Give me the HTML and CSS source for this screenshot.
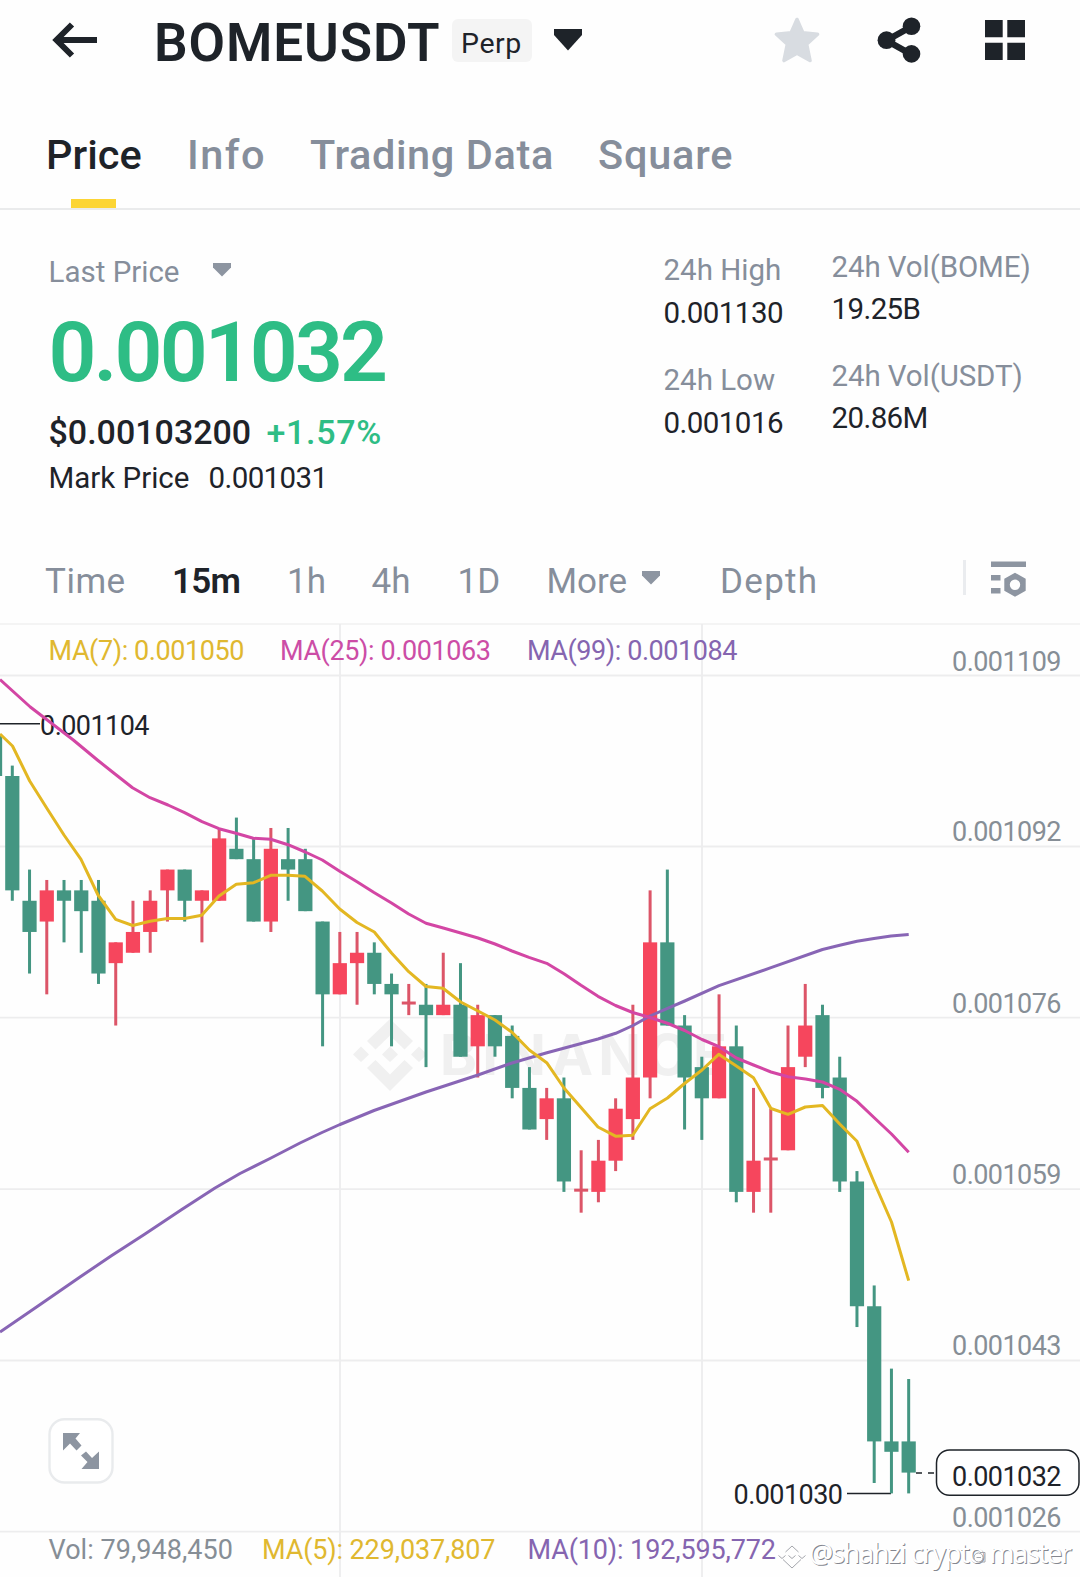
FILE: index.html
```html
<!DOCTYPE html>
<html lang="en">
<head>
<meta charset="utf-8">
<title>BOMEUSDT Perp</title>
<link rel="stylesheet" href="styles.css">
</head>
<body>
<header class="topbar">
  <svg class="back" width="46" height="36" viewBox="0 0 46 36"><path d="M20 2.5 4.5 18 20 33.5M4.5 18H45" fill="none" stroke="#1e2329" stroke-width="6"/></svg>
  <h1 class="pair">BOMEUSDT</h1>
  <span class="badge">Perp</span>
  <svg class="pair-caret" width="28" height="22" viewBox="0 0 28 22"><path d="M0 0H28V6L14 21.5 0 6Z" fill="#1e2329"/></svg>
  <div class="actions">
    <svg width="46" height="47" viewBox="0 0 46 47"><path d="M23 2.5 28.8 15.7 43.5 17.2 32.6 27.2 36 43.5 23 36.3 10 43.5 13.4 27.2 2.5 17.2 17.2 15.7Z" fill="#d8dce1" stroke="#d8dce1" stroke-width="3.6" stroke-linejoin="round"/></svg>
    <svg width="44" height="47" viewBox="0 0 44 47"><path d="M34.5 9.5 9.5 23.5 34.5 37.5" fill="none" stroke="#1e2329" stroke-width="6.5"/><g fill="#1e2329"><circle cx="34.5" cy="9.3" r="8.8"/><circle cx="9.5" cy="23.2" r="8.9"/><circle cx="34.5" cy="36.9" r="8.8"/></g></svg>
    <svg width="40" height="40" viewBox="0 0 40 40"><path d="M0 0h17.7v17.2H0zM22.3 0H40v17.2H22.3zM0 22.7h17.7V40H0zM22.3 22.7H40V40H22.3z" fill="#1e2329"/></svg>
  </div>
</header>

<nav class="tabs">
  <a class="tab tab-price active">Price</a>
  <a class="tab tab-info">Info</a>
  <a class="tab tab-data">Trading Data</a>
  <a class="tab tab-square">Square</a>
</nav>

<section class="summary">
  <div class="quote">
    <div class="quote-label"><span>Last Price</span><svg width="18" height="14" viewBox="0 0 18 14"><path d="M0 0H18V4.5L9 13.5 0 4.5Z" fill="#8d95a1"/></svg></div>
    <div class="quote-price">0.001032</div>
    <div class="quote-usd"><span class="usd">$0.00103200</span><span class="change">+1.57%</span></div>
    <div class="quote-mark"><span class="mark-label">Mark Price</span><span class="mark-value">0.001031</span></div>
  </div>
  <dl class="stats stats-range">
    <div><dt>24h High</dt><dd>0.001130</dd></div>
    <div><dt>24h Low</dt><dd>0.001016</dd></div>
  </dl>
  <dl class="stats stats-volume">
    <div><dt>24h Vol(BOME)</dt><dd>19.25B</dd></div>
    <div><dt>24h Vol(USDT)</dt><dd>20.86M</dd></div>
  </dl>
</section>

<nav class="intervals">
  <a class="iv iv-time">Time</a>
  <a class="iv iv-15m active">15m</a>
  <a class="iv iv-1h">1h</a>
  <a class="iv iv-4h">4h</a>
  <a class="iv iv-1d">1D</a>
  <a class="iv iv-more">More</a>
  <svg class="more-caret" width="18" height="14" viewBox="0 0 18 14"><path d="M0 0H18V4.5L9 13.5 0 4.5Z" fill="#8d95a1"/></svg>
  <a class="iv iv-depth">Depth</a>
  <span class="divider"></span>
  <svg class="settings" width="35" height="36" viewBox="0 0 35 36"><g fill="#8d95a1"><path d="M0 .5H35V6H0zM0 14H9.5V19.5H0zM0 27H9.5V32.5H0z"/><path fill-rule="evenodd" d="M24 11.8 34.7 17.7V29.8L24 35.8 13.3 29.8V17.7ZM24 18.6a5.2 5.2 0 1 0 0 10.4 5.2 5.2 0 0 0 0-10.4Z"/></g></svg>
</nav>

<section class="chart">
  <svg id="plot" width="1080" height="954" viewBox="0 623 1080 954">
    <g class="grid">
      <path class="edge" d="M0 624H1080"/>
      <path d="M0 675.5H1080M0 846.5H1080M0 1017.7H1080M0 1189.2H1080M0 1360.5H1080M0 1531.7H1080M340 624V1577M702 624V1577"/>
    </g>
    <g class="brand">
      <path d="M390 1019 413 1041 404.500 1049.500 390 1035.500 375.500 1049.500 367 1041ZM390 1091 413 1068 404.500 1060 390 1074.500 375.500 1060 367 1068ZM390 1046.500 398 1054.500 390 1062 382 1054.500ZM361 1046.500 369 1054.500 361 1062 353 1054.500ZM419 1046.500 427 1054.500 419 1062 411 1054.500Z"/>
      <text x="440" y="1075" textLength="287">BINANCE</text>
    </g>
    <g class="extreme">
      <text x="40" y="734.500" textLength="109.500">0.001104</text>
      <text x="733.500" y="1504.300" textLength="109.500">0.001030</text>
      <path d="M0 723.700H40M847 1493.500H891M916 1472.900H922M928 1472.900H934"/>
    </g>
    <g id="candles"></g>
    <g class="averages">
      <polyline class="ma99" points="0,1332 38,1306 80,1277 111,1256 145,1234 181,1210 215,1188 240,1173.500 270,1158.500 300,1143 322,1132.500 340,1124.500 374,1110.500 426,1092 478,1075 512,1063 546,1053 598,1039 615.700,1033.300 633,1025.500 650,1016 667.500,1008.300 684.700,1001 719,985.700 771,967.700 822.500,949.500 839.700,945.200 857,941.300 874,938.500 891,936 908.700,934.500"/>
      <polyline class="ma25" points="0,679.500 30.300,707 73.300,740 98,760.500 115,774 132.500,787.700 150,797.700 168,805 184.600,812.700 202,821.700 219,828.700 236,833.300 253.300,838.300 270.700,839.300 288,844.700 305.300,852 322.300,860 339.700,871.300 357,881.700 374,892.500 391.500,903 408.700,914 426,923.300 443.300,928 460.700,933 478,938 495,944 512,951 529,957.300 546.700,963.300 564,973.700 581,985.300 598,996.300 615.500,1005.500 632.700,1012.500 650,1017.500 668,1023.500 684.700,1030.500 702,1039.500 719,1046.700 736.300,1058 753.500,1065 771,1072 788,1076.700 805.500,1078.900 822.500,1082 839.700,1089.300 857,1101.300 874.500,1118 891.500,1134 908.700,1152.300"/>
      <polyline class="ma7" points="0,734 12.500,746 29.700,781 47,808.500 64,835 81,859.300 98,895 115.700,919.300 132.700,925.500 150,921.300 167.500,918.400 184.700,918.400 201.700,915.300 219,896 236.300,884.300 253.700,882.700 270.700,875.300 288,875.300 305,876.300 322.300,891 339.700,909 357,922.500 374.300,932 391.500,953 408.700,971.700 426,986.500 443,988.300 460.700,1002 478,1011 495,1020 512,1032.300 529.300,1050 546.700,1062.700 564,1088 581,1107.500 598,1127 616,1136.300 632.700,1135.300 650,1108.700 667.500,1098 684.500,1083.500 702,1070 718.700,1054.300 736,1065.700 753.500,1077.700 771,1108.500 788,1114.300 805.300,1107 822.500,1105.500 839.700,1124 857,1141.300 874,1182 891.500,1222 908.700,1280.700"/>
    </g>
    <g class="legend">
      <text class="gold" x="48.500" y="659.600" textLength="196">MA(7): 0.001050</text>
      <text class="pink" x="280" y="659.600" textLength="211">MA(25): 0.001063</text>
      <text class="violet" x="527" y="659.600" textLength="210.500">MA(99): 0.001084</text>
      <text class="gray" x="48.500" y="1559.300" textLength="184.500">Vol: 79,948,450</text>
      <text class="gold" x="262" y="1559.300" textLength="233.500">MA(5): 229,037,807</text>
      <text class="violet" x="527.500" y="1559.300" textLength="248.500">MA(10): 192,595,772</text>
    </g>
    <g class="axis">
      <text x="952" y="670.500" textLength="109.500">0.001109</text>
      <text x="952" y="841.400" textLength="109.500">0.001092</text>
      <text x="952" y="1012.600" textLength="109.500">0.001076</text>
      <text x="952" y="1183.600" textLength="109.500">0.001059</text>
      <text x="952" y="1355.200" textLength="109.500">0.001043</text>
      <text x="952" y="1526.500" textLength="109.500">0.001026</text>
      <rect x="936.500" y="1450" width="142.500" height="45.300" rx="13"/>
      <text class="last" x="952" y="1486" textLength="109.500">0.001032</text>
    </g>
    <g class="expand">
      <rect x="49.500" y="1419.200" width="63" height="63.300" rx="15"/>
      <path d="M63 1433H80L75.500 1438.500 81.500 1445.500 76.500 1450.500 70 1443.500 63 1450.500ZM99 1469H81.500L87.500 1462 81 1455.500 86 1451.500 92 1458 99 1451.500Z"/>
    </g>
    <g class="signature">
      <path d="M785.500 1552 792 1546 798.500 1552M778.500 1555.500 782 1558.500 785.500 1555.500M788.500 1555.500 792 1558.500 795.500 1555.500M798.500 1555.500 802 1558.500 805.500 1555.500M783 1559.500 792 1568 801 1559.500"/>
      <text x="809" y="1562.500" textLength="263">@shahzi crypto master</text>
      <circle cx="978.500" cy="1557.500" r="4.500"/><path d="M976.500 1557.500H981M980 1552.500H985V1562H980"/>
    </g>
  </svg>
</section>
<script src="chart.js"></script>
</body>
</html>
```
FILE: styles.css
```css
* { box-sizing: border-box; margin: 0; padding: 0; }
body { width: 1080px; height: 1577px; overflow: hidden; background: #fefefe; color: #1e2329; font-family: Roboto, "Liberation Sans", sans-serif; }
svg { display: block; flex: none; }
a, span, dt, dd, h1 { white-space: nowrap; }

.topbar { display: flex; align-items: center; height: 80px; padding: 0 55px 0 52px; }
.pair { width: 295px; margin-left: 56px; padding-top: 6px; font-size: 53px; line-height: 60px; font-weight: 600; letter-spacing: 0.9px; }
.badge { width: 80px; height: 43px; margin-left: 3px; padding: 5px 0 0 9px; border-radius: 6px; background: #f4f4f4; font-size: 28.500px; line-height: 39px; letter-spacing: 0.6px; }
.pair-caret { margin-left: 22px; }
.actions { display: flex; align-items: center; gap: 57px; margin-left: auto; }
.actions svg:last-child { margin-left: 7px; }

.tabs { display: flex; gap: 44px; height: 130px; padding: 50px 0 0 46px; border-bottom: 2px solid #eaebec; }
.tab { position: relative; height: 78px; font-size: 41.500px; line-height: 50px; font-weight: 500; color: #868e9b; }
.tab.active { color: #1e2329; }
.tab.active::after { content: ""; position: absolute; left: 25px; bottom: 0; width: 45px; height: 9px; background: #fcd535; }
.tab-price { width: 97px; }
.tab-info { width: 79px; letter-spacing: 1.500px; }
.tab-data { width: 244px; letter-spacing: 0.600px; }
.tab-square { letter-spacing: 0.800px; }

.summary { display: flex; height: 330px; padding-left: 48.500px; }
.quote { width: 615px; padding-top: 42px; }
.quote-label { display: flex; align-items: center; height: 40px; font-size: 29.500px; color: #868e9b; }
.quote-label span { width: 164.500px; }
.quote-label svg { margin-bottom: 5px; }
.quote-price { height: 118px; line-height: 121px; font-size: 84px; font-weight: 600; letter-spacing: -2.900px; color: #2ebd85; }
.quote-usd { display: flex; height: 44px; line-height: 44px; font-size: 34px; font-weight: 500; }
.usd { width: 218px; }
.change { color: #2ebd85; letter-spacing: 0.700px; }
.quote-mark { display: flex; height: 47px; line-height: 49px; font-size: 29.500px; }
.mark-label { width: 160px; }
.mark-value { letter-spacing: -0.600px; }
.stats { display: flex; flex-direction: column; gap: 26px; font-size: 29.500px; line-height: 42px; }
.stats-range { width: 168px; padding-top: 39px; }
.stats-range dd { padding-top: 1px; margin-bottom: -1px; letter-spacing: -0.550px; }
.stats-volume { gap: 25px; padding-top: 36px; }
.stats-volume dd { letter-spacing: -0.600px; }
.stats-volume dt { letter-spacing: -0.100px; }
.stats dt { color: #868e9b; }

.intervals { display: flex; align-items: center; height: 83px; padding-left: 45px; font-size: 35px; color: #868e9b; }
.iv.active { color: #1e2329; font-weight: 600; letter-spacing: -0.800px; }
.iv-time { width: 127px; letter-spacing: 0.500px; }
.iv-15m { width: 115px; }
.iv-1h { width: 84.500px; }
.iv-4h { width: 86px; }
.iv-1d { width: 89px; }
.iv-more { width: 95.500px; }
.more-caret { margin-bottom: 8px; }
.iv-depth { width: 243px; margin-left: 60px; letter-spacing: 1.300px; }
.divider { width: 3px; height: 35px; margin-bottom: 8px; background: #eaecef; }
.settings { margin: 0 0 6px 24.500px; }

.chart { height: 954px; }
.chart text { font-size: 27px; }
.grid path { fill: none; stroke: #ededee; stroke-width: 1.800; }
.grid .edge { stroke: #f4f4f4; }
.brand { fill: #f0f0f0; }
.brand text { font: 700 56px Inter, sans-serif; }
.extreme text { fill: #1e2329; }
.extreme path { stroke: #1e2329; stroke-width: 1.500; }
.averages polyline { fill: none; stroke-width: 3; stroke-linejoin: round; }
.ma7 { stroke: #e3b722; }
.ma25 { stroke: #d346a4; }
.ma99 { stroke: #8865b5; }
.gold { fill: #e0b830; }
.pink { fill: #cc4da6; }
.violet { fill: #8565b0; }
.gray, .axis text { fill: #868e96; }
.axis rect { fill: #fff; stroke: #1e2329; stroke-width: 1.500; }
.axis .last { fill: #1e2329; }
.expand rect { fill: #fff; stroke: #e9ebed; stroke-width: 2.400; }
.expand path { fill: #8d95a1; }
.up { fill: #f6465d; }
.down { fill: #449682; }
.wick.up { fill: #dc5568; }
.signature text { font-family: "Noto Sans", sans-serif; fill: #fff; text-shadow: 1px 1px 0.500px #85878f; }
.signature path, .signature circle { fill: none; stroke: #a4a6ac; stroke-width: 1; }
```
FILE: chart.js
```js
// Each candle: direction (r/g), body top, body bottom, high, low, in millionths.
const candles = [
  ["g",1103,1099,1103,1099],
  ["g",1099,1088,1100,1087],["g",1087,1084,1090,1080],["r",1088,1085,1089,1078],["g",1088,1087,1089,1083],
  ["g",1088,1086,1089,1082],["g",1087,1080,1089,1079],["r",1083,1081,1083,1075],["r",1084,1082,1087,1082],
  ["r",1087,1084,1088,1082],["r",1090,1088,1090,1085],["g",1090,1087,1090,1085],["r",1088,1087,1088,1083],
  ["r",1093,1087,1094,1087],["g",1092,1091,1095,1091],["g",1091,1085,1093,1085],["r",1092,1085,1094,1084],
  ["g",1091,1090,1094,1087],["g",1091,1086,1092,1086],["g",1085,1078,1085,1073],["r",1081,1078,1084,1078],
  ["r",1082,1081,1084,1077],["g",1082,1079,1083,1078],["g",1079,1078,1080,1073],["r",1077,1077,1079,1076],
  ["g",1077,1076,1079,1071],["r",1077,1076,1082,1076],["g",1077,1072,1081,1072],["r",1076,1073,1077,1070],
  ["g",1076,1073,1076,1072],["g",1074,1069,1075,1068],["g",1069,1065,1071,1065],["r",1068,1066,1069,1064],
  ["g",1068,1060,1070,1059],["r",1059,1059,1063,1057],["r",1062,1059,1064,1058],["r",1067,1062,1068,1061],
  ["r",1070,1066,1077,1064],["r",1083,1070,1088,1068],["g",1083,1075,1090,1075],["g",1075,1070,1076,1065],
  ["g",1071,1068,1072,1064],["r",1073,1068,1078,1068],["g",1073,1059,1075,1058],["r",1062,1059,1069,1057],
  ["r",1062,1062,1067,1057],["r",1071,1063,1075,1063],["r",1075,1072,1079,1071],["g",1076,1069,1077,1068],
  ["g",1070,1060,1072,1059],["g",1060,1048,1061,1046],["g",1048,1035,1050,1031],["g",1035,1034,1042,1030],
  ["g",1035,1032,1041,1030]
];
const layer = document.getElementById("candles");
const y = p => 1472.6 - (p - 1032) * 10.397;
function bar(x, top, width, height, cls) {
  const r = document.createElementNS("http://www.w3.org/2000/svg", "rect");
  r.setAttribute("x", x);
  r.setAttribute("y", top);
  r.setAttribute("width", width);
  r.setAttribute("height", height);
  r.setAttribute("class", cls);
  layer.appendChild(r);
}
candles.forEach(([dir, top, bottom, high, low], i) => {
  const x = 12.3 + (i - 1) * 17.238;
  const cls = dir === "r" ? "up" : "down";
  bar(x - 1.5, y(high), 3, y(low) - y(high), "wick " + cls);
  if (top === bottom) bar(x - 7, y(top) - 3.2, 14, 3, "wick " + cls);
  else bar(x - 7.1, y(top), 14.2, y(bottom) - y(top), cls);
});
```
